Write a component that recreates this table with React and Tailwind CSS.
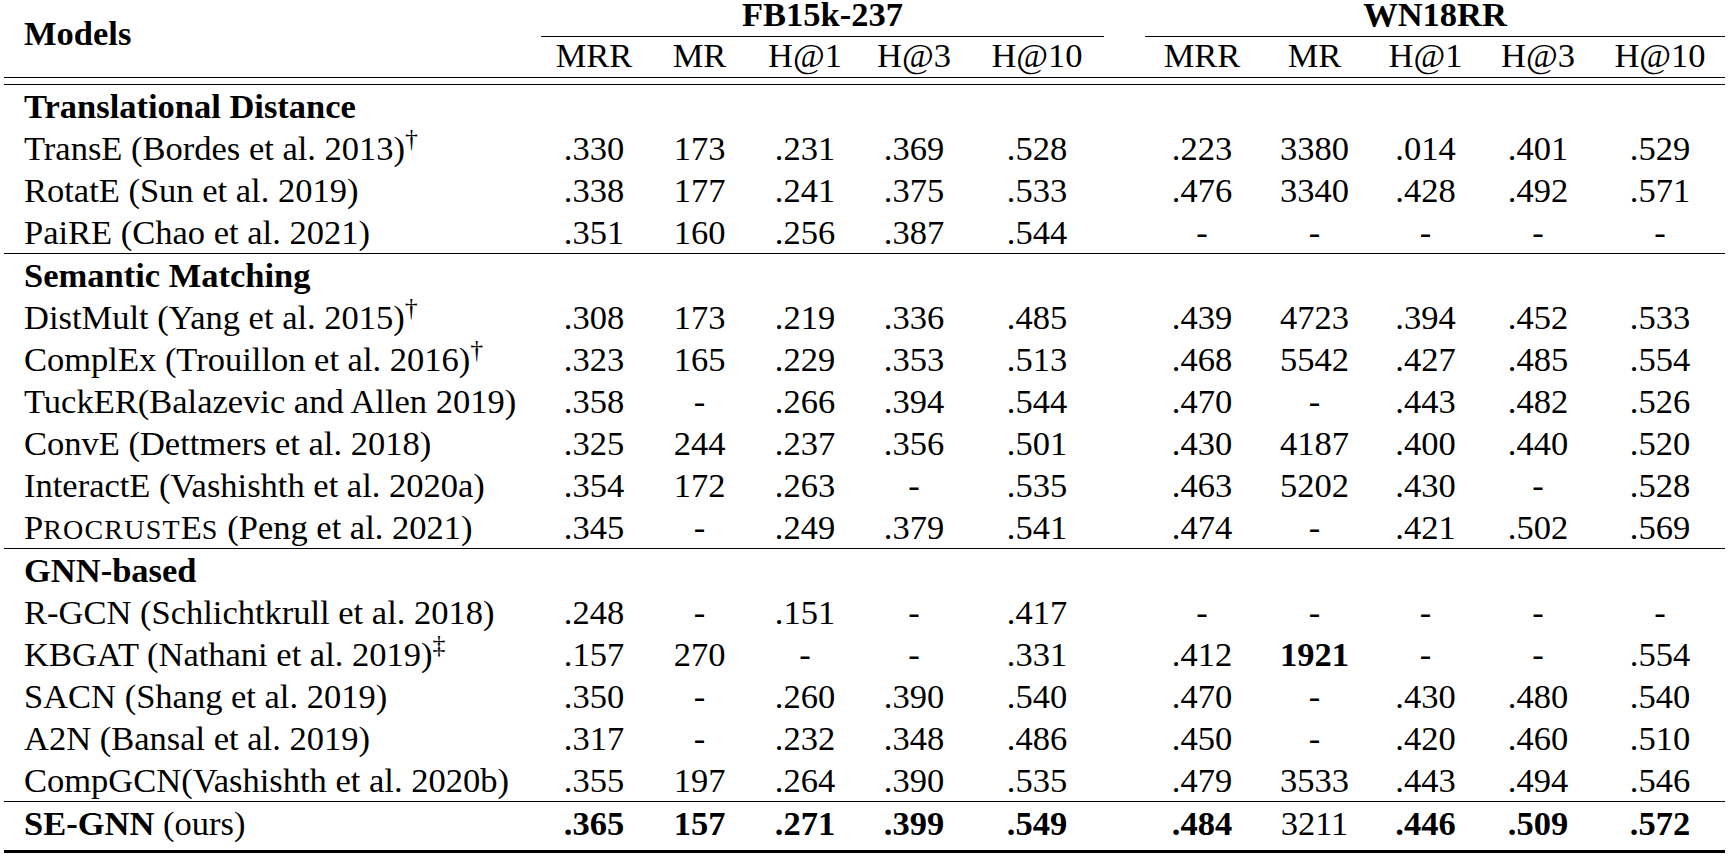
const cols =
  'grid grid-cols-[537px_106px_105px_106px_112px_134px_41px_114px_111px_111px_114px_130px]'

const dagger = <sup>†</sup>
const ddagger = <sup>‡</sup>

const sections = [
  {
    title: 'Translational Distance',
    rows: [
      [<>TransE (Bordes et al. 2013){dagger}</>, ['.330', '173', '.231', '.369', '.528'], ['.223', '3380', '.014', '.401', '.529']],
      ['RotatE (Sun et al. 2019)', ['.338', '177', '.241', '.375', '.533'], ['.476', '3340', '.428', '.492', '.571']],
      ['PaiRE (Chao et al. 2021)', ['.351', '160', '.256', '.387', '.544'], ['-', '-', '-', '-', '-']],
    ],
  },
  {
    title: 'Semantic Matching',
    rows: [
      [<>DistMult (Yang et al. 2015){dagger}</>, ['.308', '173', '.219', '.336', '.485'], ['.439', '4723', '.394', '.452', '.533']],
      [<>ComplEx (Trouillon et al. 2016){dagger}</>, ['.323', '165', '.229', '.353', '.513'], ['.468', '5542', '.427', '.485', '.554']],
      ['TuckER(Balazevic and Allen 2019)', ['.358', '-', '.266', '.394', '.544'], ['.470', '-', '.443', '.482', '.526']],
      ['ConvE (Dettmers et al. 2018)', ['.325', '244', '.237', '.356', '.501'], ['.430', '4187', '.400', '.440', '.520']],
      ['InteractE (Vashishth et al. 2020a)', ['.354', '172', '.263', '-', '.535'], ['.463', '5202', '.430', '-', '.528']],
      [
        <>
          P<span className="text-[28px] uppercase tracking-[1.2px]">rocrust</span>E
          <span className="text-[28px] uppercase tracking-[1.2px]">s</span> (Peng et al. 2021)
        </>,
        ['.345', '-', '.249', '.379', '.541'],
        ['.474', '-', '.421', '.502', '.569'],
      ],
    ],
  },
  {
    title: 'GNN-based',
    rows: [
      ['R-GCN (Schlichtkrull et al. 2018)', ['.248', '-', '.151', '-', '.417'], ['-', '-', '-', '-', '-']],
      [<>KBGAT (Nathani et al. 2019){ddagger}</>, ['.157', '270', '-', '-', '.331'], ['.412', <b key="b">1921</b>, '-', '-', '.554']],
      ['SACN (Shang et al. 2019)', ['.350', '-', '.260', '.390', '.540'], ['.470', '-', '.430', '.480', '.540']],
      ['A2N (Bansal et al. 2019)', ['.317', '-', '.232', '.348', '.486'], ['.450', '-', '.420', '.460', '.510']],
      ['CompGCN(Vashishth et al. 2020b)', ['.355', '197', '.264', '.390', '.535'], ['.479', '3533', '.443', '.494', '.546']],
    ],
  },
]

function Row({ label, fb, wn, className = '' }) {
  return (
    <div className={`${cols} h-[42px] leading-[42px] ${className}`}>
      <div className="pl-5 whitespace-nowrap">{label}</div>
      {fb.map((v, i) => (
        <div key={i} className="text-center">{v}</div>
      ))}
      <div />
      {wn.map((v, i) => (
        <div key={i} className="text-center">{v}</div>
      ))}
    </div>
  )
}

const metrics = ['MRR', 'MR', 'H@1', 'H@3', 'H@10']

export default function App() {
  return (
    <div className="min-h-screen bg-white">
      <div className="ml-[4px] w-[1721px] [font-family:Liberation_Serif,Times_New_Roman,serif] text-[34.5px] text-black">
        {/* header */}
        <div className={`${cols} grid-rows-[37px_40px]`}>
          <div className="row-span-2 pl-5 pt-[12px] leading-[42px] font-bold">Models</div>
          <div className="col-span-5 border-b border-black text-center font-bold leading-[29px]">FB15k-237</div>
          <div />
          <div className="col-span-5 border-b border-black text-center font-bold leading-[29px]">WN18RR</div>
          {metrics.map((m) => (
            <div key={'f' + m} className="text-center leading-[36px]">{m}</div>
          ))}
          <div />
          {metrics.map((m) => (
            <div key={'w' + m} className="text-center leading-[36px]">{m}</div>
          ))}
        </div>
        <div className="h-px bg-black" />
        <div className="h-[6px]" />
        <div className="h-px bg-black" />

        {sections.map((s) => (
          <div key={s.title} className="border-b border-black">
            <div className="h-[42px] pl-5 font-bold leading-[42px]">{s.title}</div>
            {s.rows.map(([label, fb, wn], i) => (
              <Row key={i} label={label} fb={fb} wn={wn} />
            ))}
          </div>
        ))}

        <Row
          className="h-[48px]"
          label={<><b>SE-GNN</b> (ours)</>}
          fb={['.365', '157', '.271', '.399', '.549'].map((v) => <b key={v}>{v}</b>)}
          wn={[<b key="a">.484</b>, '3211', <b key="c">.446</b>, <b key="d">.509</b>, <b key="e">.572</b>]}
        />
        <div className="h-[3px] bg-black" />
      </div>
    </div>
  )
}
